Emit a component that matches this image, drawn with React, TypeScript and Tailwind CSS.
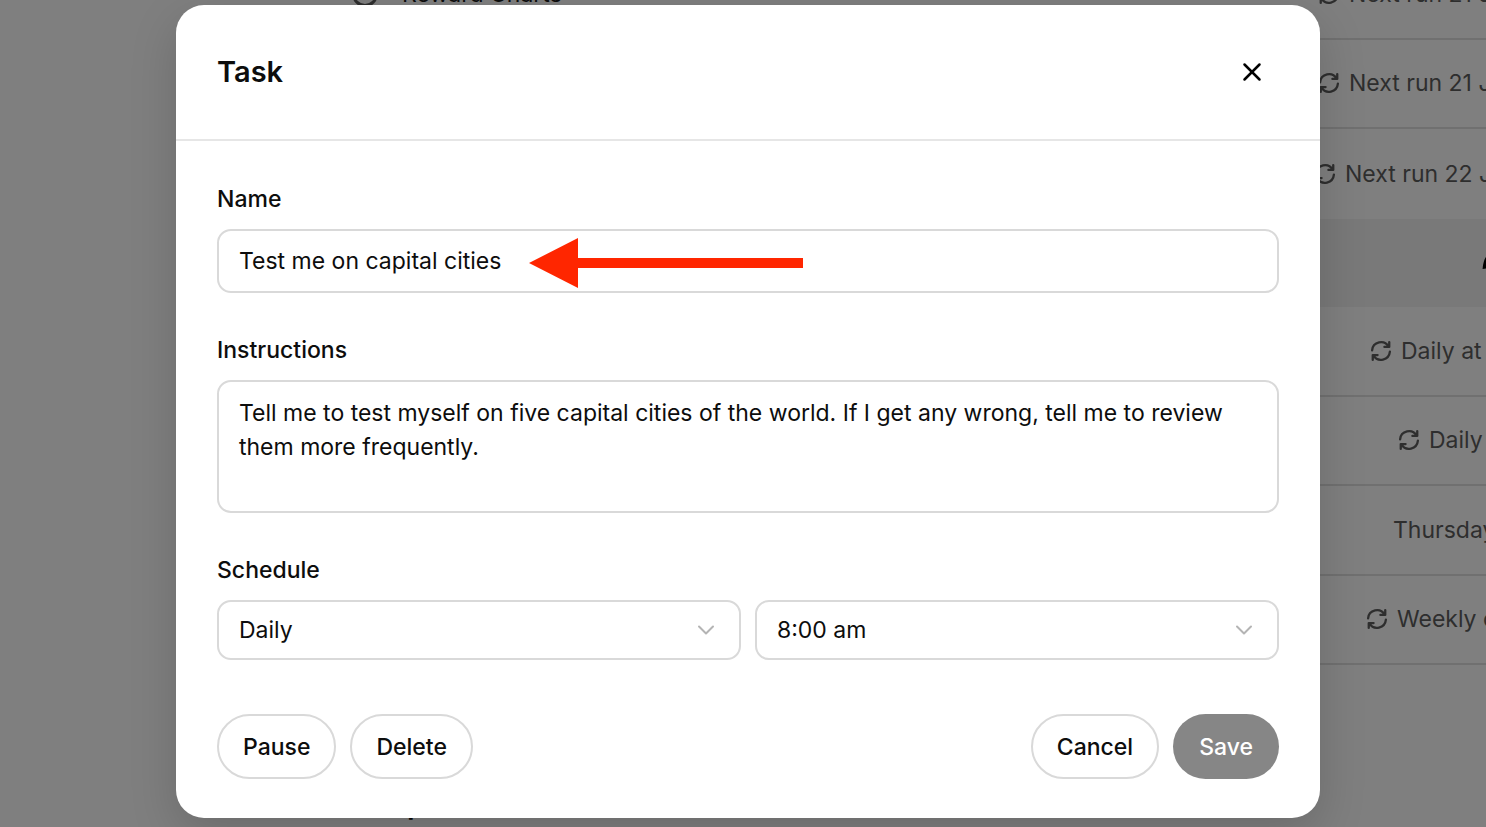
import React from "react";
import { X } from "lucide-react";

type Row = { meta: string; pad: string; repeats: boolean; title?: string };

const upcoming: Row[] = [
  { meta: "Next run 21 J", pad: "pl-[978px]", repeats: true, title: "Reward Charts" },
  { meta: "Next run 21 J", pad: "pl-[978px]", repeats: true },
  { meta: "Next run 22 J", pad: "pl-[974px]", repeats: true },
];

const scheduled: Row[] = [
  { meta: "Daily at", pad: "pl-[1030px]", repeats: true },
  { meta: "Daily", pad: "pl-[1058px]", repeats: true },
  { meta: "Thursday", pad: "pl-[1053px]", repeats: false },
  { meta: "Weekly o", pad: "pl-[1026px]", repeats: true },
];

function RepeatIcon() {
  return (
    <svg viewBox="0 0 24 24" className="size-[22px] shrink-0" fill="none" stroke="currentColor" strokeWidth="2.5" strokeLinecap="round" strokeLinejoin="round" aria-hidden="true">
      <path d="M2.300 11.300A9.700 9.700 0 0 1 20.300 7.200M21 2.300V7.600H15.700" />
      <path d="M21.700 12.700A9.700 9.700 0 0 1 3.700 16.800M3 21.700V16.400H8.300" />
    </svg>
  );
}

function TaskRow({ row }: { row: Row }) {
  return (
    <li className={`relative flex items-center whitespace-nowrap border-b-2 border-[#e0e0e0] ${row.pad}`}>
      {row.title && (
        <span className="absolute left-[12px] flex items-center gap-6 text-[#1a1a1a]">
          <span className="size-[26px] rounded-full border-[3px] border-[#5d5d5d]" />
          {row.title}
        </span>
      )}
      <span className="flex items-center gap-[9px] text-[#5d5d5d]">
        {row.repeats && <RepeatIcon />}
        {row.meta}
      </span>
    </li>
  );
}

function Chevron() {
  return (
    <svg viewBox="0 0 18 12" className="pointer-events-none absolute right-[26px] top-1/2 h-3 w-[18px] -translate-y-1/2" fill="none" stroke="#b4b4b4" strokeWidth="2" strokeLinecap="round" strokeLinejoin="round" aria-hidden="true">
      <path d="M2 2.500l7 7 7-7" />
    </svg>
  );
}

function ScheduleSelect({ label, value }: { label: string; value: string }) {
  return (
    <div className="relative flex-1">
      <select aria-label={label} defaultValue={value} className="h-[60px] w-full appearance-none rounded-[14px] border-2 border-[#d9d9d9] bg-white px-5 outline-none">
        <option>{value}</option>
      </select>
      <Chevron />
    </div>
  );
}

const outline = "h-[65px] rounded-full border-2 border-[#d9d9d9] px-6 font-medium";

export default function App() {
  return (
    <div className="relative h-screen overflow-hidden bg-white font-['Inter','Liberation_Sans',sans-serif] text-[23px] leading-8 text-[#0d0d0d]">
      <div className="-mt-[50px] pl-[340px]" aria-hidden="true">
        <ul className="grid h-[269px] auto-rows-fr [&>li:last-child]:border-b-0">
          {upcoming.map((row, i) => <TaskRow key={i} row={row} />)}
        </ul>
        <div className="flex h-[88px] items-center justify-end bg-[#f2f2f2]">
          <svg viewBox="0 0 4 14" className="h-[14px] w-1" aria-hidden="true">
            <path d="M4 1C2.500 3 1.200 6 .6 13L4 12.500" fill="#000" />
          </svg>
        </div>
        <ul className="grid h-[358px] auto-rows-fr">
          {scheduled.map((row, i) => <TaskRow key={i} row={row} />)}
        </ul>
        <p className="mt-[123px] pl-[67px] text-[29px] font-semibold">p</p>
      </div>

      <div className="absolute inset-0 bg-black/50">
        <div role="dialog" aria-labelledby="dialog-title" className="ml-[176px] mr-[166px] mt-[5px] rounded-[28px] bg-white shadow-[0_16px_48px_rgba(0,0,0,0.16)]">
          <header className="flex h-[136px] items-center justify-between border-b-2 border-[#e6e6e6] px-[41px]">
            <h2 id="dialog-title" className="text-[29px] font-semibold">Task</h2>
            <button type="button" aria-label="Close" className="flex size-[54px] items-center justify-center">
              <X className="size-[30px] text-black" strokeWidth={2} />
            </button>
          </header>

          <form className="px-[41px] pb-[39px] pt-[42px]" onSubmit={(e) => e.preventDefault()}>
            <div className="flex flex-col gap-[41px]">
              <div className="relative flex flex-col gap-[14px]">
                <label htmlFor="name" className="font-medium">Name</label>
                <input id="name" defaultValue="Test me on capital cities" className="h-[64px] w-full rounded-[14px] border-2 border-[#d9d9d9] px-5 outline-none" />
                <svg viewBox="0 0 274 50" className="pointer-events-none absolute left-[312px] top-[55px] h-[50px] w-[274px]" aria-hidden="true">
                  <path d="M0 25L49 0v20h225v10H49v20z" fill="#ff2600" />
                </svg>
              </div>
              <div className="flex flex-col gap-[14px]">
                <label htmlFor="instructions" className="font-medium">Instructions</label>
                <textarea
                  id="instructions"
                  defaultValue="Tell me to test myself on five capital cities of the world. If I get any wrong, tell me to review them more frequently."
                  className="block h-[133px] w-full resize-none rounded-[14px] border-2 border-[#d9d9d9] px-5 py-[14px] leading-[34px] outline-none"
                />
              </div>
              <fieldset>
                <legend className="mb-[14px] font-medium">Schedule</legend>
                <div className="flex gap-[14px]">
                  <ScheduleSelect label="Frequency" value="Daily" />
                  <ScheduleSelect label="Time" value="8:00 am" />
                </div>
              </fieldset>
            </div>
            <div className="mt-[54px] flex justify-between">
              <div className="flex gap-[14px]">
                <button type="button" className={outline}>Pause</button>
                <button type="button" className={outline}>Delete</button>
              </div>
              <div className="flex gap-[14px]">
                <button type="button" className={outline}>Cancel</button>
                <button type="submit" className="h-[65px] rounded-full bg-[#868686] px-[26px] font-medium text-white">Save</button>
              </div>
            </div>
          </form>
        </div>
      </div>
    </div>
  );
}
